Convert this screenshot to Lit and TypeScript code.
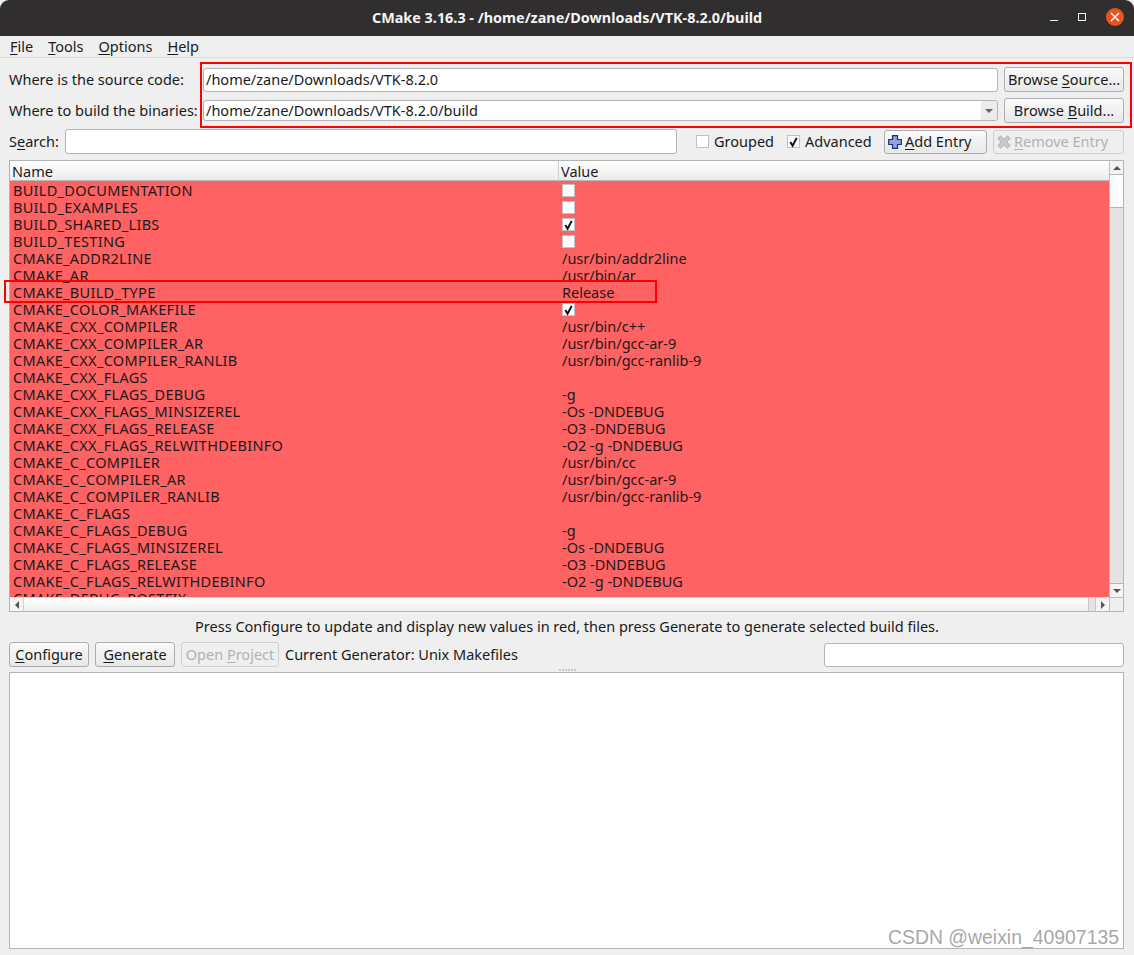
import { LitElement, html, css } from "lit";
import { customElement } from "lit/decorators.js";

type Row = [string, string | boolean];
const ROWS: Row[] = [
  ["BUILD_DOCUMENTATION", false],
  ["BUILD_EXAMPLES", false],
  ["BUILD_SHARED_LIBS", true],
  ["BUILD_TESTING", false],
  ["CMAKE_ADDR2LINE", "/usr/bin/addr2line"],
  ["CMAKE_AR", "/usr/bin/ar"],
  ["CMAKE_BUILD_TYPE", "Release"],
  ["CMAKE_COLOR_MAKEFILE", true],
  ["CMAKE_CXX_COMPILER", "/usr/bin/c++"],
  ["CMAKE_CXX_COMPILER_AR", "/usr/bin/gcc-ar-9"],
  ["CMAKE_CXX_COMPILER_RANLIB", "/usr/bin/gcc-ranlib-9"],
  ["CMAKE_CXX_FLAGS", ""],
  ["CMAKE_CXX_FLAGS_DEBUG", "-g"],
  ["CMAKE_CXX_FLAGS_MINSIZEREL", "-Os -DNDEBUG"],
  ["CMAKE_CXX_FLAGS_RELEASE", "-O3 -DNDEBUG"],
  ["CMAKE_CXX_FLAGS_RELWITHDEBINFO", "-O2 -g -DNDEBUG"],
  ["CMAKE_C_COMPILER", "/usr/bin/cc"],
  ["CMAKE_C_COMPILER_AR", "/usr/bin/gcc-ar-9"],
  ["CMAKE_C_COMPILER_RANLIB", "/usr/bin/gcc-ranlib-9"],
  ["CMAKE_C_FLAGS", ""],
  ["CMAKE_C_FLAGS_DEBUG", "-g"],
  ["CMAKE_C_FLAGS_MINSIZEREL", "-Os -DNDEBUG"],
  ["CMAKE_C_FLAGS_RELEASE", "-O3 -DNDEBUG"],
  ["CMAKE_C_FLAGS_RELWITHDEBINFO", "-O2 -g -DNDEBUG"],
  ["CMAKE_DEBUG_POSTFIX", ""],
];

const check = html`<svg class="tick" viewBox="0 0 12 12" width="12" height="12"><path d="M2.5 6 L5 10 L9.5 1.5" fill="none" stroke="#111" stroke-width="2.2"/></svg>`;

@customElement("app-root")
export class AppRoot extends LitElement {
  static styles = css`
    :host { display: block; width: 1134px; height: 955px; position: relative; overflow: hidden;
      background: #efefef; color: #1a1a1a; font-family: "Noto Sans", sans-serif; font-size: 14.5px; line-height: 17px; }
    u { text-decoration-thickness: 1px; text-underline-offset: 2px; }
    .title { height: 36px; padding-bottom: 2px; box-sizing: border-box; background: #302e2e; border-radius: 9px 9px 0 0; display: flex; align-items: center; justify-content: center;
      color: #f4f4f4; font-weight: 700; font-size: 14.4px; position: relative; }
    .wc { position: absolute; right: 10px; top: 8px; display: flex; align-items: center; gap: 20px; }
    .min { width: 8px; height: 1px; background: #f0f0f0; margin-top: 6px; }
    .max { width: 6px; height: 6px; border: 1px solid #f0f0f0; }
    .close { width: 18px; height: 18px; border-radius: 50%; background: #e95420; display: flex; align-items: center; justify-content: center; }
    .menu { height: 21px; padding-left: 10px; display: flex; gap: 15px; align-items: center; border-bottom: 1px solid #d8d8d8; background: #efefef; }
    .form { padding: 9px 10px 0 9px; display: grid; grid-template-columns: 188px 1fr 120px; column-gap: 6px; row-gap: 6px; align-items: center; }
    .form > span { white-space: nowrap; }
    .input { height: 24px; box-sizing: border-box; background: #fff; border: 1px solid #b4b4b4; border-radius: 3px; padding-left: 2px; display: flex; align-items: center; }
    .combo { justify-content: space-between; padding-right: 0; height: 21px; }
    .arrowbox { width: 16px; height: 19px; background: #ececec; display: flex; align-items: center; justify-content: center; border-radius: 0 3px 3px 0; }
    .arrow { width: 0; height: 0; border-left: 4px solid transparent; border-right: 4px solid transparent; border-top: 4px solid #666; }
    .btn { box-sizing: border-box; height: 25px; border: 1px solid #adadad; border-radius: 3px; background: linear-gradient(#fafafa, #e8e8e8);
      display: flex; align-items: center; justify-content: center; white-space: nowrap; gap: 3px; }
    .btn.start { justify-content: flex-start; padding-left: 3px; width: 103px; height: 24px; }
    .btn.wide { width: 131px; margin-left: 6px; }
    .btn.off { color: #b2b2b2; border-color: #cfcfcf; background: #efefef; }
    .searchrow { padding: 6px 10px 0 9px; display: flex; align-items: center; height: 25px; }
    .searchrow .lbl { width: 56px; }
    .searchrow .input { width: 612px; height: 25px; }
    .cb { width: 13px; height: 13px; box-sizing: border-box; background: #fff; border: 1px solid #c2c2c2; display: inline-flex; align-items: center; justify-content: center; flex: none; }
    .opt { display: flex; align-items: center; gap: 5px; }
    .opt.grouped { margin-left: 19px; width: 86px; }
    .opt.advanced { margin-left: 5px; width: 97px; }
    .table { margin: 6px 10px 0 9px; height: 452px; box-sizing: border-box; border: 1px solid #b4b4b4; background: #fff; display: grid;
      grid-template-columns: 1fr 14px; grid-template-rows: 20px 416px 14px; }
    .head { display: grid; grid-template-columns: 548px 1fr; background: linear-gradient(#ffffff, #ececec); border-bottom: 1px solid #b8b8b8; box-sizing: border-box; height: 20px; }
    .head span { padding-left: 2px; line-height: 20px; }
    .head span + span { border-left: 1px solid #cfcfcf; padding-left: 2px; }
    .rows { background: #ff6262; overflow: hidden; height: 416px; padding-top: 1px; box-sizing: border-box; }
    .row { height: 17px; display: grid; grid-template-columns: 549px 1fr; align-items: center; }
    .row .n { padding-left: 3px; letter-spacing: .3px; }
    .row .v { padding-left: 3px; display: flex; align-items: center; }
    .vbar { grid-column: 2; grid-row: 1 / span 2; background: #e3e3e3; border-left: 1px solid #bdbdbd; display: flex; flex-direction: column; }
    .sbtn { height: 14px; background: #f4f4f4; display: flex; align-items: center; justify-content: center; flex: none; box-sizing: border-box; }
    .sbtn.top { border-bottom: 1px solid #b4b4b4; }
    .sbtn.bot { border-top: 1px solid #b4b4b4; }
    .up { width: 0; height: 0; border-left: 4px solid transparent; border-right: 4px solid transparent; border-bottom: 4px solid #555; }
    .down { width: 0; height: 0; border-left: 4px solid transparent; border-right: 4px solid transparent; border-top: 4px solid #555; }
    .fill { flex: 1; }
    .thumb { height: 33px; background: linear-gradient(90deg, #fafafa, #ffffff); border-bottom: 1px solid #b4b4b4; box-sizing: border-box; }
    .hbar { grid-column: 1; grid-row: 3; display: flex; border-top: 1px solid #dcdcdc; box-sizing: border-box; background: #e3e3e3; }
    .hb { width: 14px; background: #f4f4f4; display: flex; align-items: center; justify-content: center; flex: none; }
    .hb.l { border-right: 1px solid #d4d4d4; box-sizing: border-box; }
    .hb.r { border-left: 1px solid #c8c8c8; box-sizing: border-box; margin-left: 6px; }
    .hthumb { flex: 1; background: linear-gradient(#fff, #f0f0f0); border-right: 1px solid #c8c8c8; }
    .left { width: 0; height: 0; border-top: 4px solid transparent; border-bottom: 4px solid transparent; border-right: 4px solid #555; }
    .right { width: 0; height: 0; border-top: 4px solid transparent; border-bottom: 4px solid transparent; border-left: 4px solid #555; }
    .corner { grid-column: 2; grid-row: 3; background: #efefef; border-left: 1px solid #bdbdbd; border-top: 1px solid #bdbdbd; }
    .msg { text-align: center; height: 30px; line-height: 28px; }
    .actions { padding: 0 10px 0 9px; display: flex; align-items: center; gap: 6px; height: 25px; }
    .actions .grow { flex: 1; }
    .actions .input { width: 300px; height: 24px; }
    .b80 { width: 80px; }
    .b98 { width: 98px; }
    .dots { height: 5px; display: flex; justify-content: center; align-items: center; gap: 1px; }
    .dots i { width: 2px; height: 2px; background: #c8c8c8; }
    .output { margin: 0 10px 0 9px; height: 277px; box-sizing: border-box; background: #fff; border: 1px solid #b4b4b4; }
    .mark { position: absolute; border: 2px solid #f00; box-sizing: border-box; pointer-events: none; }
    .m1 { left: 200px; top: 62px; width: 932px; height: 66px; }
    .m2 { left: 4px; top: 280px; width: 653px; height: 23px; }
    .wm { position: absolute; right: 15px; top: 925px; color: #a8a8a8; font-family: "Liberation Sans", sans-serif; font-size: 19.4px; line-height: 24px; }
  `;

  render() {
    return html`
      <div class="title">CMake 3.16.3 - /home/zane/Downloads/VTK-8.2.0/build
        <div class="wc">
          <div class="min"></div><div class="max"></div>
          <div class="close"><svg width="10" height="10" viewBox="0 0 10 10"><path d="M1 1 L9 9 M9 1 L1 9" stroke="#fff" stroke-width="1.4"/></svg></div>
        </div>
      </div>
      <div class="menu"><span><u>F</u>ile</span><span><u>T</u>ools</span><span><u>O</u>ptions</span><span><u>H</u>elp</span></div>
      <div class="form">
        <span>Where is the source code:</span>
        <div class="input">/home/zane/Downloads/VTK-8.2.0</div>
        <div class="btn"><span>Browse <u>S</u>ource...</span></div>
        <span>Where to build the binaries:</span>
        <div class="input combo"><span>/home/zane/Downloads/VTK-8.2.0/build</span><div class="arrowbox"><div class="arrow"></div></div></div>
        <div class="btn"><span>Browse <u>B</u>uild...</span></div>
      </div>
      <div class="searchrow">
        <span class="lbl">S<u>e</u>arch:</span>
        <div class="input"></div>
        <div class="opt grouped"><span class="cb"></span><span>Grouped</span></div>
        <div class="opt advanced"><span class="cb">${check}</span><span>Advanced</span></div>
        <div class="btn start">
          <svg width="14" height="14" viewBox="0 0 14 14"><path d="M4.5 .7 H9.5 V4.5 H13.3 V9.5 H9.5 V13.3 H4.5 V9.5 H.7 V4.5 H4.5 Z" fill="#8fa3dc" stroke="#1f2f7a" stroke-width="1.2"/></svg>
          <span><u>A</u>dd Entry</span>
        </div>
        <div class="btn off start wide">
          <svg width="14" height="14" viewBox="0 0 14 14"><path d="M.8 3.5 L3.5 .8 L7 4.2 L10.5 .8 L13.2 3.5 L9.8 7 L13.2 10.5 L10.5 13.2 L7 9.8 L3.5 13.2 L.8 10.5 L4.2 7 Z" fill="#c8c8c8" stroke="#b4b4b4"/></svg>
          <span><u>R</u>emove Entry</span>
        </div>
      </div>
      <div class="table">
        <div class="head"><span>Name</span><span>Value</span></div>
        <div class="rows">
          ${ROWS.map(([n, v]) => html`<div class="row"><span class="n">${n}</span><span class="v">${typeof v === "boolean" ? html`<span class="cb">${v ? check : ""}</span>` : v}</span></div>`)}
        </div>
        <div class="vbar">
          <div class="sbtn top"><div class="up"></div></div>
          <div class="thumb"></div>
          <div class="fill"></div>
          <div class="sbtn bot"><div class="down"></div></div>
        </div>
        <div class="hbar"><div class="hb l"><div class="left"></div></div><div class="hthumb"></div><div class="hb r"><div class="right"></div></div></div>
        <div class="corner"></div>
      </div>
      <div class="msg">Press Configure to update and display new values in red, then press Generate to generate selected build files.</div>
      <div class="actions">
        <div class="btn b80"><span><u>C</u>onfigure</span></div>
        <div class="btn b80"><span><u>G</u>enerate</span></div>
        <div class="btn off b98"><span>Open <u>P</u>roject</span></div>
        <span class="grow">Current Generator: Unix Makefiles</span>
        <div class="input"></div>
      </div>
      <div class="dots"><i></i><i></i><i></i><i></i><i></i><i></i></div>
      <div class="output"></div>
      <div class="mark m1"></div>
      <div class="mark m2"></div>
      <div class="wm">CSDN @weixin_40907135</div>
    `;
  }
}
